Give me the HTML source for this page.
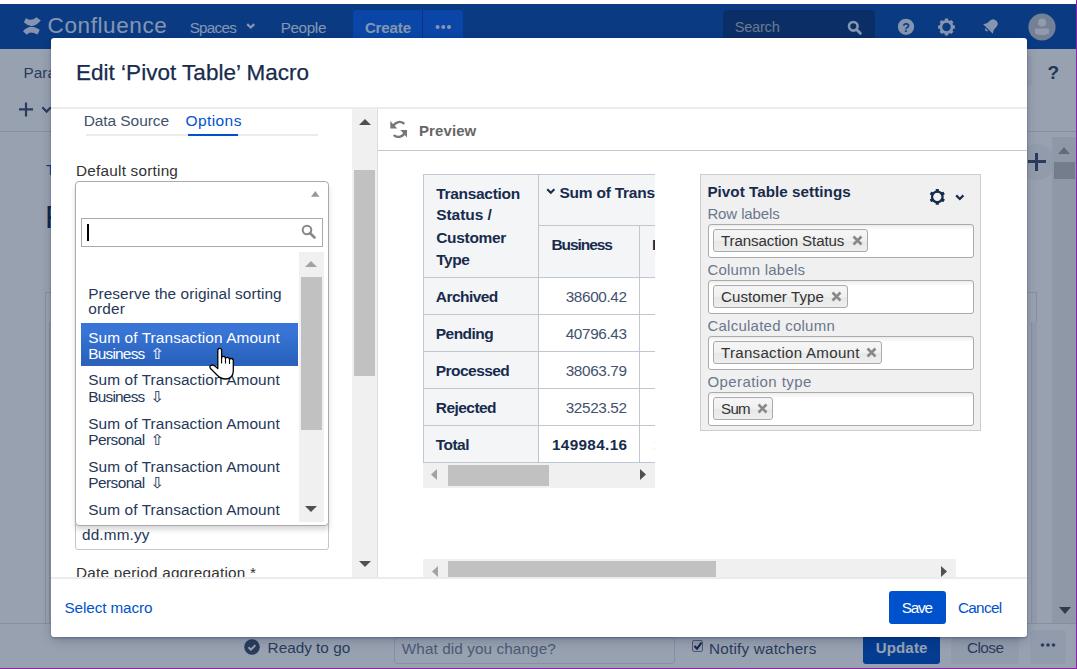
<!DOCTYPE html><html><head><meta charset="utf-8"><style>
*{margin:0;padding:0;box-sizing:border-box}
html,body{width:1077px;height:669px;overflow:hidden;background:#fff;font-family:"Liberation Sans",sans-serif}
.t{position:absolute;line-height:1;white-space:nowrap}
.r{position:absolute}
svg{position:absolute;overflow:visible}
</style></head><body>
<div class="r" style="left:0px;top:4px;width:1077px;height:45px;background:#0b4eb0"></div>
<div class="r" style="left:0px;top:49px;width:1077px;height:620px;background:#fff"></div>
<svg style="left:18px;top:12px" width="30" height="28" viewBox="0 0 30 28"><path d="M8 5.9 Q13 10 18.4 5.2 L22.8 8.4 Q14 18.5 5.9 10.3 Z" fill="#deebff"/><path d="M5 19.3 Q12 10.8 21.8 17.8 L19.5 22.6 Q12 18.5 8.8 22.8 Z" fill="#deebff"/></svg><div class="t" style="left:47.60px;top:14.75px;font-size:22.5px;color:#deebff;font-weight:400;letter-spacing:0.597px;">Confluence</div>
<div class="t" style="left:189.70px;top:19.73px;font-size:15.2px;color:#deebff;font-weight:400;letter-spacing:-0.700px;">Spaces</div>
<svg style="left:246px;top:23px" width="10" height="6"><path d="M1.2 1.2 L4.7 4.5 L8.2 1.2" stroke="#deebff" stroke-width="2.3" fill="none"/></svg><div class="t" style="left:280.70px;top:19.73px;font-size:15.2px;color:#deebff;font-weight:400;letter-spacing:-0.327px;">People</div>
<div class="r" style="left:353px;top:10px;width:110px;height:40px;background:#0a63f0;border-radius:3px"></div>
<div class="r" style="left:422px;top:10px;width:1px;height:40px;background:#0747a6"></div>
<div class="t" style="left:364.90px;top:20.20px;font-size:15px;color:#deebff;font-weight:700;letter-spacing:-0.119px;">Create</div>
<svg style="left:435px;top:24px" width="18" height="6"><circle cx="2.6" cy="3" r="2" fill="#deebff"/><circle cx="8.3" cy="3" r="2" fill="#deebff"/><circle cx="14" cy="3" r="2" fill="#deebff"/></svg><div class="r" style="left:723px;top:10px;width:152px;height:40px;background:#0d3a80;border-radius:4px"></div>
<div class="t" style="left:734.70px;top:19.64px;font-size:14.6px;color:#b3bac5;font-weight:400;letter-spacing:-0.232px;">Search</div>
<svg style="left:847px;top:20px" width="16" height="16" viewBox="0 0 16 16"><circle cx="6.3" cy="6.3" r="4.3" stroke="#deebff" stroke-width="2.6" fill="none"/><path d="M9.5 9.5 L13.3 13.3" stroke="#deebff" stroke-width="3" stroke-linecap="round"/></svg><svg style="left:893px;top:14px" width="25" height="25" viewBox="0 0 25 25"><circle cx="13" cy="12.8" r="8.1" fill="#deebff"/><text x="13.1" y="17.6" font-family="Liberation Sans" font-weight="700" font-size="12.5" text-anchor="middle" fill="#0b4eb0">?</text></svg><svg style="left:936px;top:17px" width="21" height="21" viewBox="0 0 21 21"><g fill="#deebff"><rect x="8.8" y="1.6" width="3.4" height="4" rx="0.5" transform="rotate(0 10.5 10)"/><rect x="8.8" y="1.6" width="3.4" height="4" rx="0.5" transform="rotate(45 10.5 10)"/><rect x="8.8" y="1.6" width="3.4" height="4" rx="0.5" transform="rotate(90 10.5 10)"/><rect x="8.8" y="1.6" width="3.4" height="4" rx="0.5" transform="rotate(135 10.5 10)"/><rect x="8.8" y="1.6" width="3.4" height="4" rx="0.5" transform="rotate(180 10.5 10)"/><rect x="8.8" y="1.6" width="3.4" height="4" rx="0.5" transform="rotate(225 10.5 10)"/><rect x="8.8" y="1.6" width="3.4" height="4" rx="0.5" transform="rotate(270 10.5 10)"/><rect x="8.8" y="1.6" width="3.4" height="4" rx="0.5" transform="rotate(315 10.5 10)"/></g><circle cx="10.5" cy="10" r="5.6" stroke="#deebff" stroke-width="2.6" fill="none"/></svg><svg style="left:978px;top:14px" width="25" height="25" viewBox="0 0 25 25"><g transform="translate(10.2 14.8) rotate(45)" fill="#deebff"><path d="M-6.8 0.3 L-4.8 -3 L-4.3 -8 Q-3.8 -11.5 0 -11.5 Q3.8 -11.5 4.3 -8 L4.8 -3 L6.8 0.3 Z"/><path d="M-2.6 1.6 A2.2 2.2 0 0 0 1.6 1.6 Z"/></g></svg><svg style="left:1027.5px;top:12.5px" width="28" height="28" viewBox="0 0 28 28"><circle cx="14" cy="14" r="13.6" fill="#c1c7d0"/><circle cx="14" cy="9.5" r="4" fill="#f4f5f7"/><path d="M7 15.5 h14 v5 q-7 3 -14 0z" fill="#f4f5f7"/></svg><div class="t" style="left:23.60px;top:64.85px;font-size:15.3px;color:#42526e;font-weight:400;">Parameters</div>
<svg style="left:18px;top:101.5px" width="34" height="16"><path d="M8 0.5 v14 M1 7.3 h14" stroke="#42526e" stroke-width="2.2"/><path d="M24.3 5.3 l4.3 4.3 l4.3 -4.3" stroke="#42526e" stroke-width="2.2" fill="none"/></svg><div class="r" style="left:0px;top:131px;width:1077px;height:1px;background:#dfe1e6"></div>
<div class="t" style="left:46.00px;top:162.05px;font-size:15.3px;color:#0052cc;font-weight:400;">Table</div>
<div class="t" style="left:45.00px;top:201.76px;font-size:31px;color:#172b4d;font-weight:400;">Fi</div>
<div class="r" style="left:45px;top:292px;width:992px;height:332px;border:1px solid #dfe1e6"></div>
<div class="r" style="left:1031px;top:322px;width:6px;height:301px;background:#f4f5f7;border-left:1px solid #dfe1e6"></div>
<div class="r" style="left:49px;top:322px;width:1px;height:301px;background:#dfe1e6"></div>
<div class="r" style="left:992px;top:56px;width:40px;height:30px;background:#f4f5f7;border-radius:3px"></div>
<div class="t" style="left:1047.60px;top:62.92px;font-size:19px;color:#344563;font-weight:700;letter-spacing:0.000px;">?</div>
<div class="r" style="left:1019px;top:144px;width:36px;height:36px;border-radius:50%;background:#f4f5f7"></div><svg style="left:1027px;top:151px" width="20" height="21"><path d="M9.5 2 v18 M1 10.5 h18" stroke="#42526e" stroke-width="3"/></svg><div class="r" style="left:1052px;top:137px;width:24px;height:486px;background:#f0f0f0"></div>
<svg style="left:1058px;top:147px" width="12" height="7"><path d="M0 7 L6.0 0 L12 7Z" fill="#a3a3a3"/></svg>
<div class="r" style="left:1054px;top:162px;width:21px;height:17px;background:#c1c1c1"></div>
<svg style="left:1059px;top:607px" width="12" height="7"><path d="M0 0 L6.0 7 L12 0Z" fill="#505050"/></svg>
<div class="r" style="left:0px;top:623px;width:1077px;height:46px;background:#fff;border-top:1px solid #dfe1e6"></div>
<svg style="left:244px;top:639px" width="16" height="16"><circle cx="8" cy="8" r="7.8" fill="#42526e"/><path d="M4.5 8.3 l2.4 2.4 l4.5 -4.6" stroke="#fff" stroke-width="2" fill="none"/></svg><div class="t" style="left:267.60px;top:640.35px;font-size:15.3px;color:#42526e;font-weight:400;letter-spacing:0.009px;">Ready to go</div>
<div class="r" style="left:394px;top:637px;width:281px;height:27px;border:1px solid #dfe1e6;border-radius:3px;background:#fff"></div>
<div class="t" style="left:401.80px;top:640.55px;font-size:15.3px;color:#7a869a;font-weight:400;letter-spacing:0.092px;">What did you change?</div>
<div class="r" style="left:692px;top:640px;width:11px;height:12px;border:1px solid #7a869a;border-radius:2px;background:#f4f5f7"></div>
<svg style="left:693px;top:641px" width="10" height="10"><path d="M1.5 5 l2.5 2.7 l4.5 -6" stroke="#172b4d" stroke-width="2" fill="none"/></svg><div class="t" style="left:709.00px;top:640.65px;font-size:15.3px;color:#42526e;font-weight:400;letter-spacing:0.194px;">Notify watchers</div>
<div class="r" style="left:863px;top:630px;width:77px;height:34px;background:#0052cc;border-radius:3px"></div>
<div class="t" style="left:875.70px;top:640.00px;font-size:15px;color:#fff;font-weight:700;letter-spacing:0.173px;">Update</div>
<div class="r" style="left:951px;top:630px;width:68px;height:34px;background:#f4f5f7;border-radius:3px"></div>
<div class="t" style="left:967.00px;top:639.75px;font-size:15.3px;color:#42526e;font-weight:400;letter-spacing:-0.554px;">Close</div>
<div class="r" style="left:1030px;top:630px;width:36px;height:34px;background:#f4f5f7;border-radius:3px"></div>
<svg style="left:1040px;top:642px" width="16" height="6"><circle cx="2.5" cy="3" r="1.8" fill="#42526e"/><circle cx="8" cy="3" r="1.8" fill="#42526e"/><circle cx="13.5" cy="3" r="1.8" fill="#42526e"/></svg><div class="r" style="left:0px;top:4px;width:1077px;height:665px;background:rgba(9,30,66,0.42)"></div>
<div class="r" style="left:51px;top:38px;width:976px;height:599px;background:#fff;border-radius:3px;box-shadow:0 0 0 1px rgba(9,30,66,.08),0 2px 2px rgba(9,30,66,.12),0 4px 12px -2px rgba(9,30,66,.3)"></div><div class="t" style="left:76.00px;top:62.45px;font-size:22.5px;color:#172b4d;font-weight:400;letter-spacing:0.017px;-webkit-text-stroke:0.25px #172b4d;">Edit ‘Pivot Table’ Macro</div>
<div class="r" style="left:51px;top:107px;width:976px;height:2px;background:#ebecf0"></div>
<div class="t" style="left:83.70px;top:112.78px;font-size:15.5px;color:#42526e;font-weight:400;letter-spacing:-0.076px;">Data Source</div>
<div class="t" style="left:185.40px;top:112.78px;font-size:15.5px;color:#0052cc;font-weight:400;letter-spacing:0.430px;">Options</div>
<div class="r" style="left:86px;top:134px;width:232px;height:2px;background:#ebecf0"></div>
<div class="r" style="left:188px;top:134px;width:50px;height:2px;background:#0052cc"></div>
<div class="t" style="left:76.10px;top:162.85px;font-size:15.3px;color:#333;font-weight:400;letter-spacing:0.225px;">Default sorting</div>
<div class="r" style="left:75px;top:510px;width:254px;height:40px;border:1px solid #c1c7d0;border-radius:3px"></div>
<div class="t" style="left:82.00px;top:527.45px;font-size:15.3px;color:#253858;font-weight:400;letter-spacing:0.170px;">dd.mm.yy</div>
<div class="r" style="left:51px;top:550px;width:300px;height:27px;overflow:hidden"><div class="t" style="left:25.00px;top:14.65px;font-size:15.3px;color:#333;font-weight:400;letter-spacing:0.234px;">Date period aggregation *</div>
</div><div class="r" style="left:352px;top:109px;width:25px;height:469px;background:#f0f0f0"></div>
<svg style="left:358.5px;top:119px" width="12" height="6"><path d="M0 6 L6.0 0 L12 6Z" fill="#505050"/></svg>
<div class="r" style="left:354px;top:170px;width:21px;height:206px;background:#c1c1c1"></div>
<svg style="left:358.5px;top:561px" width="12" height="6"><path d="M0 0 L6.0 6 L12 0Z" fill="#505050"/></svg>
<div class="r" style="left:377px;top:109px;width:1px;height:469px;background:#dcdcdc"></div>
<div class="r" style="left:75px;top:181px;width:254px;height:345px;background:#fff;border:1px solid #aaa;border-radius:4px;box-shadow:0 4px 5px rgba(0,0,0,.15)"></div><svg style="left:311px;top:190.7px" width="8.5" height="5.8"><path d="M0 5.8 L4.25 0 L8.5 5.8Z" fill="#999"/></svg>
<div class="r" style="left:81px;top:218px;width:242px;height:29px;border:1px solid #aaa;background:#fff"></div>
<div class="r" style="left:87px;top:224px;width:2px;height:17px;background:#000"></div>
<svg style="left:301px;top:224px" width="16" height="16"><circle cx="6" cy="6" r="4.3" stroke="#888" stroke-width="2" fill="none"/><path d="M9 9 l4.5 4.5" stroke="#888" stroke-width="2.6" stroke-linecap="round"/></svg><div class="r" style="left:299px;top:252px;width:25px;height:270px;background:#f0f0f0"></div>
<svg style="left:305px;top:261px" width="12" height="6"><path d="M0 6 L6.0 0 L12 6Z" fill="#a3a3a3"/></svg>
<div class="r" style="left:301px;top:277px;width:21px;height:153px;background:#c1c1c1"></div>
<svg style="left:305px;top:506px" width="12" height="6"><path d="M0 0 L6.0 6 L12 0Z" fill="#505050"/></svg>
<div class="r" style="left:81px;top:323px;width:217px;height:43px;background-image:linear-gradient(#3875d7 20%,#2a62bc 90%)"></div>
<div class="r" style="left:76px;top:252px;width:223px;height:270px;overflow:hidden"><div class="t" style="left:12.20px;top:33.56px;font-size:15.4px;color:#253858;font-weight:400;letter-spacing:0.066px;">Preserve the original sorting</div>
<div class="t" style="left:12.20px;top:49.16px;font-size:15.4px;color:#253858;font-weight:400;letter-spacing:0.162px;">order</div>
<div class="t" style="left:12.20px;top:77.56px;font-size:15.4px;color:#fff;font-weight:400;letter-spacing:0.101px;">Sum of Transaction Amount</div>
<div class="t" style="left:12.20px;top:93.66px;font-size:15.4px;color:#fff;font-weight:400;letter-spacing:-0.769px;">Business</div>
<div class="t" style="left:74.00px;top:94.16px;font-size:15.4px;color:#fff;font-weight:400;transform:scaleX(1.15);transform-origin:left">⇧</div>
<div class="t" style="left:12.20px;top:120.46px;font-size:15.4px;color:#253858;font-weight:400;letter-spacing:0.101px;">Sum of Transaction Amount</div>
<div class="t" style="left:12.20px;top:136.56px;font-size:15.4px;color:#253858;font-weight:400;letter-spacing:-0.769px;">Business</div>
<div class="t" style="left:74.00px;top:137.06px;font-size:15.4px;color:#253858;font-weight:400;transform:scaleX(1.15);transform-origin:left">⇩</div>
<div class="t" style="left:12.20px;top:163.76px;font-size:15.4px;color:#253858;font-weight:400;letter-spacing:0.101px;">Sum of Transaction Amount</div>
<div class="t" style="left:12.20px;top:179.86px;font-size:15.4px;color:#253858;font-weight:400;letter-spacing:-0.526px;">Personal</div>
<div class="t" style="left:74.00px;top:180.36px;font-size:15.4px;color:#253858;font-weight:400;transform:scaleX(1.15);transform-origin:left">⇧</div>
<div class="t" style="left:12.20px;top:206.86px;font-size:15.4px;color:#253858;font-weight:400;letter-spacing:0.101px;">Sum of Transaction Amount</div>
<div class="t" style="left:12.20px;top:222.96px;font-size:15.4px;color:#253858;font-weight:400;letter-spacing:-0.526px;">Personal</div>
<div class="t" style="left:74.00px;top:223.46px;font-size:15.4px;color:#253858;font-weight:400;transform:scaleX(1.15);transform-origin:left">⇩</div>
<div class="t" style="left:12.20px;top:249.86px;font-size:15.4px;color:#253858;font-weight:400;letter-spacing:0.101px;">Sum of Transaction Amount</div>
</div><svg style="left:200px;top:340px" width="45" height="45" viewBox="0 0 45 45"><path d="M17.8 27 L17.8 10.5 Q17.8 8.4 19.7 8.4 Q21.6 8.4 21.6 10.5 L21.6 18 Q21.6 16.3 23.5 16.3 Q25.5 16.3 25.5 18.5 Q25.5 17.3 27.5 17.3 Q29.5 17.3 29.5 19.5 Q29.5 18.5 31.4 18.5 Q33.3 18.5 33.3 21 L33.3 31 Q33 38.5 26 39 Q21 39.2 17 35 L10.5 28.5 Q9 26.5 11 25.3 Q13 24.3 15.5 26.5 L17.8 28.5 Z" fill="#fff" stroke="#000" stroke-width="1.3" stroke-linejoin="round"/><path d="M21.6 18 v5.5 M25.5 18.5 v5 M29.5 19.5 v4.5" stroke="#000" stroke-width="1.1"/></svg><svg style="left:384px;top:115px" width="30" height="30" viewBox="0 0 30 30"><path d="M9.2 11.5 A6.8 6.8 0 0 1 19.6 8.3" stroke="#777" stroke-width="2.3" fill="none" stroke-linecap="round"/><path d="M6.3 6 L6.3 13.6 L13.2 13.6 Z" fill="#777"/><path d="M20.8 17.5 A6.8 6.8 0 0 1 10.4 20.6" stroke="#777" stroke-width="2.3" fill="none" stroke-linecap="round"/><path d="M23 15 L23 22.6 L16.4 15 Z" fill="#777"/></svg><div class="t" style="left:419.00px;top:123.30px;font-size:15px;color:#666;font-weight:700;letter-spacing:0.094px;">Preview</div>
<div class="r" style="left:378px;top:150px;width:649px;height:1px;background:#c1c7d0"></div>
<div class="r" style="left:423px;top:174px;width:232px;height:314px;overflow:hidden"><div class="r" style="left:0px;top:0px;width:400px;height:289px;background:#fff"></div>
<div class="r" style="left:0px;top:0px;width:400px;height:104px;background:#f4f5f7"></div>
<div class="r" style="left:0px;top:104px;width:116px;height:185px;background:#f4f5f7"></div>
<div class="r" style="left:0px;top:0px;width:400px;height:1px;background:#c1c7d0"></div>
<div class="r" style="left:0px;top:0px;width:1px;height:289px;background:#c1c7d0"></div>
<div class="r" style="left:115px;top:0px;width:1px;height:289px;background:#c1c7d0"></div>
<div class="r" style="left:116px;top:51px;width:284px;height:1px;background:#c1c7d0"></div>
<div class="r" style="left:216px;top:51px;width:1px;height:238px;background:#c1c7d0"></div>
<div class="r" style="left:0px;top:103px;width:400px;height:1px;background:#c1c7d0"></div>
<div class="r" style="left:0px;top:140px;width:400px;height:1px;background:#c1c7d0"></div>
<div class="r" style="left:0px;top:177px;width:400px;height:1px;background:#c1c7d0"></div>
<div class="r" style="left:0px;top:214px;width:400px;height:1px;background:#c1c7d0"></div>
<div class="r" style="left:0px;top:251px;width:400px;height:1px;background:#c1c7d0"></div>
<div class="r" style="left:0px;top:288px;width:400px;height:1px;background:#c1c7d0"></div>
<div class="t" style="left:13.20px;top:11.68px;font-size:15.5px;color:#172b4d;font-weight:700;letter-spacing:-0.300px;">Transaction</div>
<div class="t" style="left:13.20px;top:33.48px;font-size:15.5px;color:#172b4d;font-weight:700;letter-spacing:-0.041px;">Status /</div>
<div class="t" style="left:13.20px;top:55.58px;font-size:15.5px;color:#172b4d;font-weight:700;letter-spacing:-0.307px;">Customer</div>
<div class="t" style="left:13.20px;top:77.68px;font-size:15.5px;color:#172b4d;font-weight:700;letter-spacing:-0.410px;">Type</div>
<svg style="left:122.5px;top:14px" width="10" height="7"><path d="M1.2 1.2 L4.8 4.8 L8.4 1.2" stroke="#172b4d" stroke-width="2" fill="none"/></svg><div class="t" style="left:136.50px;top:11.38px;font-size:15.5px;color:#172b4d;font-weight:700;letter-spacing:-0.24px">Sum of Transaction Amount</div>
<div class="t" style="left:128.40px;top:62.58px;font-size:15.5px;color:#172b4d;font-weight:700;letter-spacing:-1.046px;">Business</div>
<div class="t" style="left:229.00px;top:62.58px;font-size:15.5px;color:#172b4d;font-weight:700;letter-spacing:-0.4px">Personal</div>
<div class="t" style="left:12.80px;top:114.78px;font-size:15.5px;color:#172b4d;font-weight:700;letter-spacing:-0.55px">Archived</div>
<div class="t" style="left:142.70px;top:114.95px;font-size:15.3px;color:#42526e;font-weight:400;letter-spacing:-0.359px;">38600.42</div>
<div class="t" style="left:12.80px;top:151.78px;font-size:15.5px;color:#172b4d;font-weight:700;letter-spacing:-0.55px">Pending</div>
<div class="t" style="left:142.70px;top:151.95px;font-size:15.3px;color:#42526e;font-weight:400;letter-spacing:-0.359px;">40796.43</div>
<div class="t" style="left:12.80px;top:188.78px;font-size:15.5px;color:#172b4d;font-weight:700;letter-spacing:-0.55px">Processed</div>
<div class="t" style="left:142.70px;top:188.95px;font-size:15.3px;color:#42526e;font-weight:400;letter-spacing:-0.359px;">38063.79</div>
<div class="t" style="left:12.80px;top:225.78px;font-size:15.5px;color:#172b4d;font-weight:700;letter-spacing:-0.55px">Rejected</div>
<div class="t" style="left:142.70px;top:225.95px;font-size:15.3px;color:#42526e;font-weight:400;letter-spacing:-0.359px;">32523.52</div>
<div class="t" style="left:12.80px;top:262.78px;font-size:15.5px;color:#172b4d;font-weight:700;letter-spacing:-0.55px">Total</div>
<div class="t" style="left:129.00px;top:262.95px;font-size:15.3px;color:#172b4d;font-weight:700;letter-spacing:0.335px;">149984.16</div>
<div class="t" style="left:231.00px;top:262.95px;font-size:15.3px;color:#172b4d;font-weight:700;">1</div>
<div class="r" style="left:0px;top:289px;width:232px;height:25px;background:#f0f0f0"></div>
<svg style="left:8px;top:295px" width="6" height="11"><path d="M6 0 L0 5.5 L6 11Z" fill="#a3a3a3"/></svg>
<div class="r" style="left:25px;top:291px;width:101px;height:21px;background:#c1c1c1"></div>
<svg style="left:217px;top:295px" width="6" height="11"><path d="M0 0 L6 5.5 L0 11Z" fill="#505050"/></svg>
</div><div class="r" style="left:700px;top:174px;width:281px;height:257px;background:#f0f0f0;border:1px solid #ccc"></div>
<div class="t" style="left:707.40px;top:184.13px;font-size:15.2px;color:#172b4d;font-weight:700;letter-spacing:0.050px;">Pivot Table settings</div>
<svg style="left:929px;top:189px" width="17" height="16" viewBox="0 0 17 16"><g fill="#172b4d"><rect x="6.7" y="0" width="3.2" height="3.6" rx="0.5" transform="rotate(0 8.3 7.9)"/><rect x="6.7" y="0" width="3.2" height="3.6" rx="0.5" transform="rotate(60 8.3 7.9)"/><rect x="6.7" y="0" width="3.2" height="3.6" rx="0.5" transform="rotate(120 8.3 7.9)"/><rect x="6.7" y="0" width="3.2" height="3.6" rx="0.5" transform="rotate(180 8.3 7.9)"/><rect x="6.7" y="0" width="3.2" height="3.6" rx="0.5" transform="rotate(240 8.3 7.9)"/><rect x="6.7" y="0" width="3.2" height="3.6" rx="0.5" transform="rotate(300 8.3 7.9)"/></g><circle cx="8.3" cy="7.9" r="5.3" stroke="#172b4d" stroke-width="2.3" fill="none"/></svg><svg style="left:955px;top:193.5px" width="10" height="7"><path d="M1.2 1.4 L4.8 5 L8.4 1.4" stroke="#172b4d" stroke-width="2.2" fill="none"/></svg><div class="t" style="left:707.40px;top:205.70px;font-size:15px;color:#6b778c;font-weight:400;letter-spacing:-0.107px;">Row labels</div>
<div class="r" style="left:707.5px;top:224.4px;width:266px;height:33.5px;background:#fff linear-gradient(#eee 1%,#fff 15%);border:1px solid #aaa;border-radius:3px"></div>
<div class="r" style="left:713.4px;top:229.4px;width:155.10000000000002px;height:22.5px;background:linear-gradient(#f4f4f4 20%,#f0f0f0 50%,#e8e8e8 52%,#eee);border:1px solid #aaa;border-radius:3px"></div>
<div class="t" style="left:721.00px;top:232.82px;font-size:15.1px;color:#333;font-weight:400;letter-spacing:-0.114px;">Transaction Status</div>
<svg style="left:852.0px;top:235.4px" width="11" height="11"><path d="M1.5 1.5 L9.5 9.5 M9.5 1.5 L1.5 9.5" stroke="#888" stroke-width="2.6"/></svg><div class="t" style="left:707.40px;top:261.90px;font-size:15px;color:#6b778c;font-weight:400;letter-spacing:0.213px;">Column labels</div>
<div class="r" style="left:707.5px;top:280.4px;width:266px;height:33.5px;background:#fff linear-gradient(#eee 1%,#fff 15%);border:1px solid #aaa;border-radius:3px"></div>
<div class="r" style="left:713.4px;top:285.4px;width:134.30000000000007px;height:22.5px;background:linear-gradient(#f4f4f4 20%,#f0f0f0 50%,#e8e8e8 52%,#eee);border:1px solid #aaa;border-radius:3px"></div>
<div class="t" style="left:721.00px;top:288.82px;font-size:15.1px;color:#333;font-weight:400;letter-spacing:0.066px;">Customer Type</div>
<svg style="left:831.2px;top:291.4px" width="11" height="11"><path d="M1.5 1.5 L9.5 9.5 M9.5 1.5 L1.5 9.5" stroke="#888" stroke-width="2.6"/></svg><div class="t" style="left:707.40px;top:317.90px;font-size:15px;color:#6b778c;font-weight:400;letter-spacing:0.250px;">Calculated column</div>
<div class="r" style="left:707.5px;top:336.4px;width:266px;height:33.5px;background:#fff linear-gradient(#eee 1%,#fff 15%);border:1px solid #aaa;border-radius:3px"></div>
<div class="r" style="left:713.4px;top:341.4px;width:169.10000000000002px;height:22.5px;background:linear-gradient(#f4f4f4 20%,#f0f0f0 50%,#e8e8e8 52%,#eee);border:1px solid #aaa;border-radius:3px"></div>
<div class="t" style="left:721.00px;top:344.82px;font-size:15.1px;color:#333;font-weight:400;letter-spacing:0.280px;">Transaction Amount</div>
<svg style="left:866.0px;top:347.4px" width="11" height="11"><path d="M1.5 1.5 L9.5 9.5 M9.5 1.5 L1.5 9.5" stroke="#888" stroke-width="2.6"/></svg><div class="t" style="left:707.40px;top:373.90px;font-size:15px;color:#6b778c;font-weight:400;letter-spacing:0.424px;">Operation type</div>
<div class="r" style="left:707.5px;top:392.4px;width:266px;height:33.5px;background:#fff linear-gradient(#eee 1%,#fff 15%);border:1px solid #aaa;border-radius:3px"></div>
<div class="r" style="left:713.4px;top:397.4px;width:59.89999999999998px;height:22.5px;background:linear-gradient(#f4f4f4 20%,#f0f0f0 50%,#e8e8e8 52%,#eee);border:1px solid #aaa;border-radius:3px"></div>
<div class="t" style="left:721.00px;top:400.82px;font-size:15.1px;color:#333;font-weight:400;letter-spacing:-0.673px;">Sum</div>
<svg style="left:756.8px;top:403.4px" width="11" height="11"><path d="M1.5 1.5 L9.5 9.5 M9.5 1.5 L1.5 9.5" stroke="#888" stroke-width="2.6"/></svg><div class="r" style="left:423px;top:559px;width:533px;height:19px;background:#f0f0f0"></div>
<svg style="left:432px;top:566px" width="6" height="11"><path d="M6 0 L0 5.5 L6 11Z" fill="#a3a3a3"/></svg>
<div class="r" style="left:448px;top:561px;width:268px;height:17px;background:#c1c1c1"></div>
<svg style="left:941px;top:566px" width="6" height="11"><path d="M0 0 L6 5.5 L0 11Z" fill="#505050"/></svg>
<div class="r" style="left:51px;top:577px;width:976px;height:2px;background:#ebecf0"></div>
<div class="t" style="left:64.50px;top:599.85px;font-size:15.3px;color:#0052cc;font-weight:400;letter-spacing:-0.117px;">Select macro</div>
<div class="r" style="left:889px;top:591px;width:57px;height:33px;background:#0052cc;border-radius:3px"></div>
<div class="t" style="left:901.70px;top:599.85px;font-size:15.3px;color:#fff;font-weight:400;letter-spacing:-1.159px;">Save</div>
<div class="t" style="left:957.90px;top:599.65px;font-size:15.3px;color:#0052cc;font-weight:400;letter-spacing:-0.666px;">Cancel</div>
<div class="r" style="left:1076px;top:0px;width:1px;height:669px;background:#8e24aa"></div>
<div class="r" style="left:0px;top:668px;width:1077px;height:1px;background:#8e24aa"></div>
</body></html>
